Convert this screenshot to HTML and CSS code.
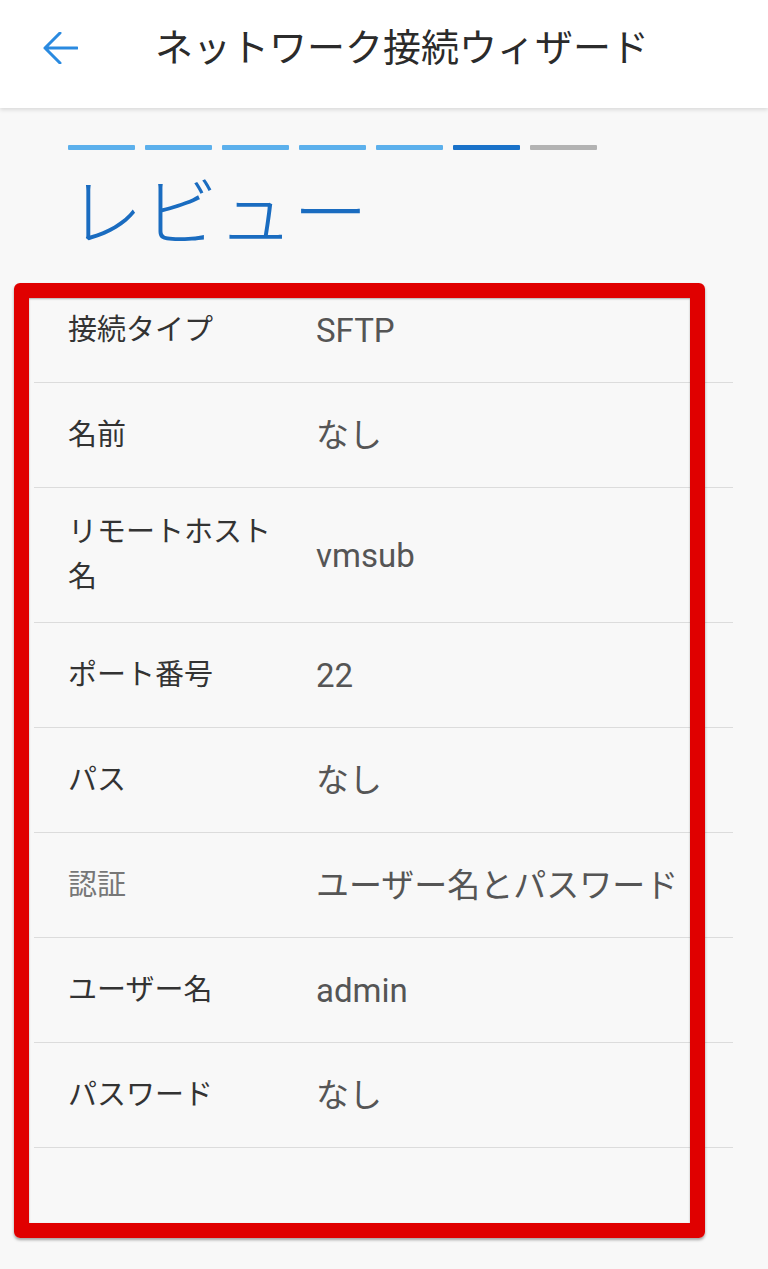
FILE: index.html
```html
<!DOCTYPE html>
<html lang="ja">
<head>
<meta charset="utf-8">
<title>ネットワーク接続ウィザード</title>
<link rel="stylesheet" href="styles.css">
</head>
<body>
<header class="appbar">
  <div class="appbar-row">
    <svg class="back" width="36" height="32" viewBox="0 0 36 32" aria-hidden="true">
      <path d="M3 16 H35 M18 1 L3 16 L18 31" fill="none" stroke="#2a8ae0" stroke-width="3" stroke-linecap="round" stroke-linejoin="round"/>
    </svg>
    <h1 class="appbar-title">ネットワーク接続ウィザード</h1>
  </div>
</header>
<main class="content">
  <div class="steps">
    <span class="step done"></span>
    <span class="step done"></span>
    <span class="step done"></span>
    <span class="step done"></span>
    <span class="step done"></span>
    <span class="step current"></span>
    <span class="step todo"></span>
  </div>
  <h2 class="page-title">レビュー</h2>
  <div class="review">
    <div class="row"><div class="label">接続タイプ</div><div class="value">SFTP</div></div>
    <div class="row"><div class="label">名前</div><div class="value">なし</div></div>
    <div class="row"><div class="label">リモートホスト名</div><div class="value">vmsub</div></div>
    <div class="row"><div class="label">ポート番号</div><div class="value">22</div></div>
    <div class="row"><div class="label">パス</div><div class="value">なし</div></div>
    <div class="row"><div class="label muted">認証</div><div class="value">ユーザー名とパスワード</div></div>
    <div class="row"><div class="label">ユーザー名</div><div class="value">admin</div></div>
    <div class="row"><div class="label">パスワード</div><div class="value">なし</div></div>
    <div class="highlight"></div>
  </div>
</main>
</body>
</html>
```
FILE: styles.css
```css
* { box-sizing: border-box; }
html, body { margin: 0; padding: 0; }
body {
  background: #f8f8f8;
  font-family: Roboto, "Noto Sans CJK JP", sans-serif;
  color: #333;
  width: 768px;
  min-height: 1269px;
  overflow: hidden;
}
.appbar {
  height: 108px;
  background: #ffffff;
  box-shadow: 0 2px 4px rgba(0,0,0,0.12);
  position: relative;
  z-index: 1;
}
.appbar-row {
  height: 96px;
  display: flex;
  align-items: center;
  padding-left: 42px;
}
.back { display: block; flex: none; }
.appbar-title {
  margin: 0 0 0 77px;
  font-size: 38px;
  font-weight: 400;
  color: #2b2b2b;
  line-height: 1;
  white-space: nowrap;
}
.content { padding-top: 37px; }
.steps {
  display: flex;
  gap: 10px;
  margin-left: 68px;
}
.step {
  width: 67px;
  height: 5px;
  border-radius: 1px;
}
.step.done { background: #5cb0ec; }
.step.current { background: #1a72c9; }
.step.todo { background: #b3b3b3; }
.page-title {
  margin: 27px 0 0 68px;
  font-size: 75px;
  line-height: 75px;
  font-weight: 300;
  color: #1a6cc0;
}
.review {
  position: relative;
  margin: 26px 0 0 34px;
  width: 699px;
}
.row {
  display: flex;
  align-items: center;
  min-height: 105px;
  padding: 22px 0;
  border-bottom: 1px solid #dcdcdc;
}
.label {
  width: 282px;
  flex: none;
  padding: 0 30px 0 34px;
  font-size: 29px;
  line-height: 45px;
  color: #333;
}
.label.muted { color: #777; }
.value {
  font-size: 33px;
  line-height: 45px;
  color: #555;
  white-space: nowrap;
}
.highlight {
  position: absolute;
  top: 5px;
  left: -20px;
  width: 691px;
  height: 955px;
  border: 15px solid #e00000;
  border-radius: 6px;
  box-shadow: 0 2px 3px rgba(0,0,0,0.35), inset 0 1px 2px rgba(0,0,0,0.3);
  pointer-events: none;
}
```
